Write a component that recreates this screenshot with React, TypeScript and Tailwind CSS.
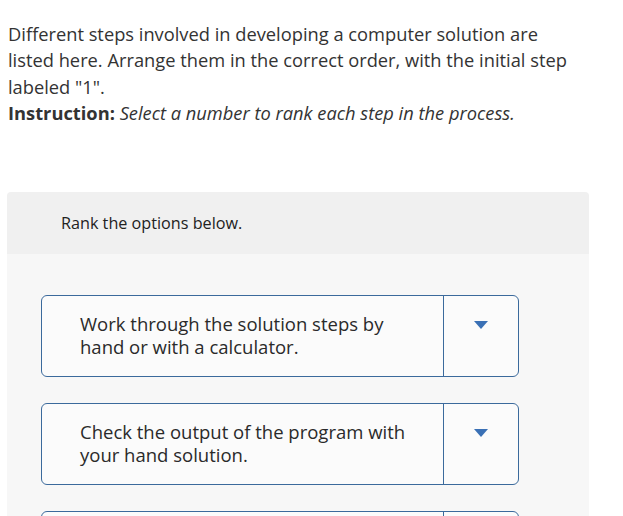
const OPTIONS = [
  'Work through the solution steps by hand or with a calculator.',
  'Check the output of the program with your hand solution.',
  'State the problem clearly.',
];

function RankRow({ text }: { text: string }) {
  return (
    <div className="flex w-[478px] h-[82px] shrink-0 rounded-[6px] border border-[#3b6a9c] bg-[#fbfbfb]">
      <div className="flex-1 flex items-center pl-[38px] pr-4 pb-[2px] text-[18.5px] leading-[23px] text-[#2a2a2a]">
        <p className="w-[330px]">{text}</p>
      </div>
      <div className="w-[75px] border-l border-[#3b6a9c] flex justify-center pt-[25px]">
        <svg width="14" height="8" viewBox="0 0 14 8">
          <polygon points="0,0 14,0 7,8" fill="#3a70b5" />
        </svg>
      </div>
    </div>
  );
}

export default function App() {
  return (
    <div className="w-[623px] h-[516px] overflow-hidden bg-white font-['Open_Sans',_'Liberation_Sans',_sans-serif]">
      <div className="pl-2 pt-[21px] text-[18.3px] leading-[26.3px] text-[#333]">
        <p className="w-[575px]">
          Different steps involved in developing a computer solution are listed here. Arrange them in the correct
          order, with the initial step labeled "1".
        </p>
        <p>
          <span className="font-bold">Instruction:</span> <em>Select a number to rank each step in the process.</em>
        </p>
      </div>

      <div className="ml-[7px] mt-[66px] w-[582px] rounded-t-[4px] overflow-hidden">
        <div className="h-[62px] bg-[#f0f0f0] flex items-center pl-[54px] text-[16.2px] text-[#222]">
          Rank the options below.
        </div>
        <div className="bg-[#f7f7f7] pt-[41px] pl-[34px] flex flex-col gap-[26px] h-[300px]">
          {OPTIONS.map((o) => (
            <RankRow key={o} text={o} />
          ))}
        </div>
      </div>
    </div>
  );
}
